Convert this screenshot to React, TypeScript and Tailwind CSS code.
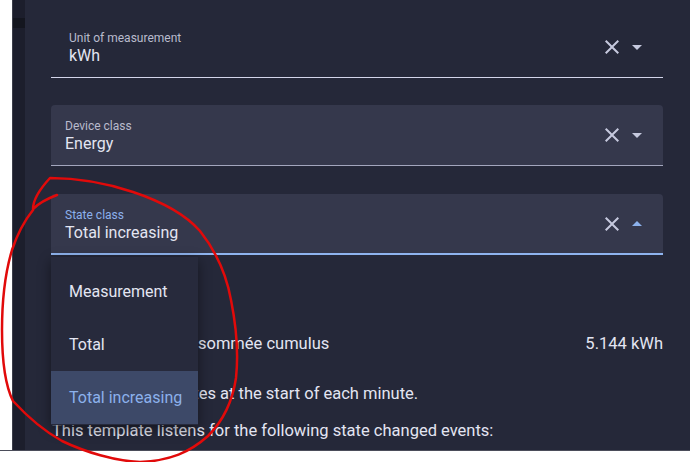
import React from 'react';

const CloseIcon = ({ className }: { className?: string }) => (
  <svg viewBox="0 0 24 24" className={className} fill="currentColor">
    <path d="M19 6.41 17.59 5 12 10.59 6.41 5 5 6.41 10.59 12 5 17.59 6.41 19 12 13.41 17.59 19 19 17.59 13.41 12z" />
  </svg>
);

const ArrowIcon = ({ up, className }: { up?: boolean; className?: string }) => (
  <svg viewBox="0 0 24 24" className={className} fill="currentColor">
    <path d={up ? 'M7 14l5-5 5 5z' : 'M7 10l5 5 5-5z'} />
  </svg>
);

interface FieldProps {
  label: string;
  value: string;
  filled?: boolean;
  open?: boolean;
}

function SelectField({ label, value, filled, open }: FieldProps) {
  const border = open
    ? 'border-b-2 border-[#8fb4ef]'
    : filled
    ? 'border-b border-[#a3a6bd]'
    : 'border-b border-[#d3d5ea]';
  return (
    <div
      className={`h-[61px] flex items-center pr-[14px] rounded-t-[4px] ${border} ${
        filled ? 'bg-[#35384c] pl-[14px]' : 'pl-[18px]'
      }`}
    >
      <div className="flex-1 flex flex-col pt-[2px]">
        <span className={`text-[12px] leading-[16px] ${open ? 'text-[#8cb1ec]' : 'text-[#b9bbcd]'}`}>{label}</span>
        <span className="text-[16px] leading-[20px] text-[#e3e5f2]">{value}</span>
      </div>
      <CloseIcon className="w-6 h-6 text-[#c6c9de]" />
      <ArrowIcon up={open} className={`w-6 h-6 ml-[1px] ${open ? 'text-[#8cb1ec]' : 'text-[#c6c9de]'}`} />
    </div>
  );
}

const OPTIONS = ['Measurement', 'Total', 'Total increasing'];

export default function App() {
  return (
    <div
      className="w-[690px] h-[462px] bg-white relative overflow-hidden flex flex-col"
      style={{ fontFamily: 'Roboto, "Liberation Sans", sans-serif' }}
    >
      <div className="h-[451px] flex border-b border-[#4b4d5a]">
        <div className="w-[12px] bg-white" />
        <div className="w-[13px] bg-[#1c1e2c] border-l border-[#3c3e4a] flex flex-col">
          <div className="h-[18px]" />
          <div className="h-[10px] bg-[#14161f]" />
        </div>
        <div className="flex-1 bg-[#252839] pt-[17px] pl-[26px] pr-[27px] text-[#e3e5f2]">
          <SelectField label="Unit of measurement" value="kWh" />
          <div className="mt-[27px]">
            <SelectField label="Device class" value="Energy" filled />
          </div>
          <div className="mt-[28px] relative">
            <SelectField label="State class" value="Total increasing" filled open />
            <div className="absolute left-0 top-[calc(100%+2px)] w-[147px] bg-[#272a3c] pt-2 pb-[1px] shadow-[0_4px_12px_rgba(0,0,0,0.45)] z-10">
              {OPTIONS.map((o, i) => (
                <div
                  key={o}
                  className={`h-[53px] flex items-center pl-[18px] text-[16px] ${
                    i === 2 ? 'bg-[#3d4968] text-[#8cb1ec]' : 'text-[#e3e5f2]'
                  }`}
                >
                  {o}
                </div>
              ))}
            </div>
          </div>
          <div className="mt-[77px] flex justify-between text-[16.5px] leading-[24px]">
            <span className="pl-[61px]">Énergie consommée cumulus</span>
            <span>5.144 kWh</span>
          </div>
          <p className="mt-[26px] text-[16.5px] leading-[24px] pl-[1px]">
            This template updates at the start of each minute.
          </p>
          <p className="mt-[13px] text-[16.5px] leading-[24px] pl-[1px]">
            This template listens for the following state changed events:
          </p>
        </div>
      </div>
      <svg className="absolute inset-0 pointer-events-none z-20" width="690" height="462" viewBox="0 0 690 462">
        <path
          d="M57 195 C49 198 40 202 33 209 C33 200 38 191 50 178 C75 178 100 181 133 192 C160 201 185 214 200 231 C215 250 226 272 231 300 C236 325 239 350 236 378 C232 405 222 422 208 436 C190 452 170 461 140 462 C115 461 85 452 62 441 C42 430 25 414 13 401 C5 385 2 360 2 330 C2 300 6 270 12 250 C17 235 25 220 33 210"
          fill="none"
          stroke="#e10a0a"
          strokeWidth="2.5"
          strokeLinejoin="round"
          strokeLinecap="round"
        />
      </svg>
    </div>
  );
}
